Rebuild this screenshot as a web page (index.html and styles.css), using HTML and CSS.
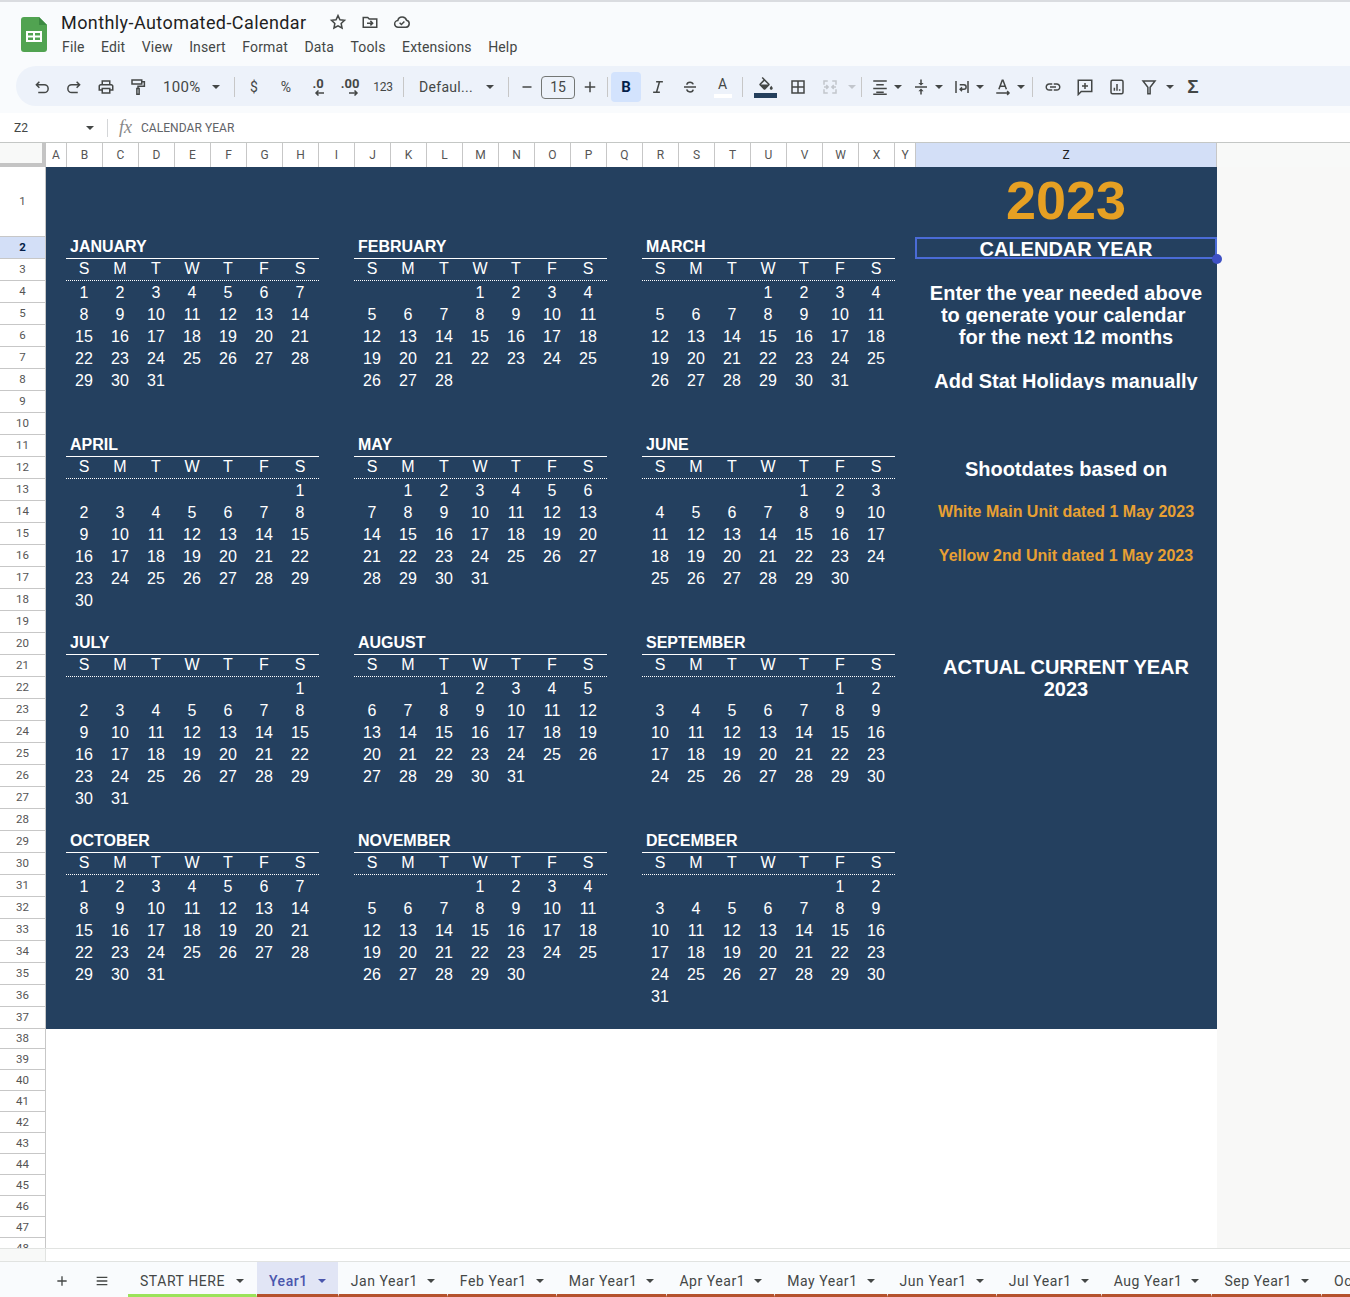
FILE: index.html
```html
<!DOCTYPE html>
<html lang="en">
  <head>
    <meta charset="UTF-8" />
    <title>Monthly-Automated-Calendar</title>
    <link rel="stylesheet" href="styles.css">
  </head>
  <body>
    <header class="topbar">
      <svg class="logo" viewBox="0 0 26 35" width="26" height="35">
        <path d="M3 0h15l8 8v24a3 3 0 0 1-3 3H3a3 3 0 0 1-3-3V3a3 3 0 0 1 3-3z" fill="#51a351" />
        <path d="M18 0l8 8h-8z" fill="#3c8a42" />
        <path d="M5 14h16v11H5z" fill="#fff" />
        <path d="M7 16h5v2.500H7zM14 16h5v2.500h-5zM7 20.500h5V23H7zM14 20.500h5V23h-5z" fill="#51a351" />
      </svg>
      <div class="doc-info">
        <div class="title-row">
          <span class="doc-title">Monthly-Automated-Calendar</span>
          <svg class="title-icon star-icon" viewBox="0 0 24 24"><path d="M12 3.500l2.600 5.600 6.100.7-4.500 4.200 1.200 6-5.400-3-5.400 3 1.200-6-4.500-4.200 6.100-.7z" /></svg>
          <svg class="title-icon" viewBox="0 0 24 24"><path d="M3 6h6l2 2h10v11H3z" /><path d="M8 13.500h7M12.500 10.500l3 3-3 3" /></svg>
          <svg class="title-icon" viewBox="0 0 24 24"><path d="M7 19a4.500 4.500 0 0 1-.6-9A6 6 0 0 1 18 9.600 4.800 4.800 0 0 1 17.500 19z" /><path d="M8.800 13l2.400 2.400 4-4" /></svg>
        </div>
        <nav class="menu">
          <span>File</span><span>Edit</span><span>View</span><span>Insert</span><span>Format</span><span>Data</span><span>Tools</span><span>Extensions</span><span>Help</span>
        </nav>
      </div>
    </header>

    <div class="toolbar-wrap">
      <div class="toolbar">
        <span class="btn"><svg class="icon" viewBox="0 0 24 24"><path d="M8.500 5L4.500 9l4 4M4.500 9H15a5.200 5.200 0 0 1 0 10.400H7" /></svg></span>
        <span class="btn"><svg class="icon" viewBox="0 0 24 24"><path d="M15.500 5l4 4-4 4M19.500 9H9a5.200 5.200 0 0 0 0 10.400h8" /></svg></span>
        <span class="btn"><svg class="icon icon-fill" viewBox="0 0 24 24"><path d="M19 8h-1V3H6v5H5c-1.660 0-3 1.340-3 3v6h4v4h12v-4h4v-6c0-1.660-1.340-3-3-3zM8 5h8v3H8V5zm8 12v2H8v-4h8v2zm2-2v-2H6v2H4v-4c0-.55.45-1 1-1h14c.55 0 1 .45 1 1v4h-2z" /></svg></span>
        <span class="btn"><svg class="icon" viewBox="0 0 24 24"><path d="M4 2.500h13v5.500H4zM17 5h3.500v6H12v3M10.500 14h3v7.500h-3z" /></svg></span>
        <span class="select zoom-select">100%<i class="caret"></i></span>
        <span class="sep"></span>
        <span class="btn glyph-small">$</span>
        <span class="btn glyph-small">%</span>
        <span class="btn"><span class="dec">.0<svg viewBox="0 0 10 6" width="10" height="6"><path d="M10 3H2M4.500 .5L2 3l2.500 2.500" /></svg></span></span>
        <span class="btn"><span class="dec">.00<svg viewBox="0 0 10 6" width="10" height="6"><path d="M0 3h8M5.500 .5L8 3 5.500 5.500" /></svg></span></span>
        <span class="btn btn-123">123</span>
        <span class="sep"></span>
        <span class="select font-select">Defaul...<i class="caret"></i></span>
        <span class="sep"></span>
        <span class="btn btn-narrow"><svg class="icon" viewBox="0 0 24 24"><path d="M6 12h12" /></svg></span>
        <span class="size-box">15</span>
        <span class="btn btn-narrow"><svg class="icon" viewBox="0 0 24 24"><path d="M5 12h14M12 5v14" /></svg></span>
        <span class="sep"></span>
        <span class="btn btn-bold">B</span>
        <span class="btn"><svg class="icon" viewBox="0 0 24 24"><path d="M9.500 5h9M5.500 19h9M14 5l-4 14" /></svg></span>
        <span class="btn"><svg class="icon" viewBox="0 0 24 24"><path d="M4 12h16M7.800 9c.2-2.200 2-3.500 4.200-3.500 2.100 0 3.700 1 4.200 3M16.200 15.500c-.2 2-2 3-4.200 3-2.300 0-4-1.200-4.300-3.200" /></svg></span>
        <span class="btn btn-text-color"><span class="color-a">A<i class="color-bar"></i></span></span>
        <span class="sep"></span>
        <span class="btn btn-fill">
          <span class="fill-stack">
            <svg class="icon icon-fill" viewBox="0 0 24 20"><path d="M16.560 8.940L7.620 0 6.210 1.410l2.380 2.380-5.150 5.150c-.59.59-.59 1.540 0 2.120l5.500 5.500c.29.29.68.44 1.060.44s.77-.15 1.060-.44l5.500-5.500c.59-.58.59-1.530 0-2.120zM5.210 10L10 5.210 14.790 10H5.210zM19 11.500s-2 2.170-2 3.500c0 1.100.9 2 2 2s2-.9 2-2c0-1.330-2-3.500-2-3.500z" /></svg>
            <i class="fill-bar"></i>
          </span>
        </span>
        <span class="btn"><svg class="icon" viewBox="0 0 24 24"><path d="M4 4h16v16H4zM12 4v16M4 12h16" /></svg></span>
        <span class="btn btn-off"><svg class="icon" viewBox="0 0 24 24"><path d="M4 9V4h5M4 15v5h5M20 9V4h-5M20 15v5h-5M10 12H4M7 9.500L9.500 12 7 14.500M14 12h6M17 9.500L14.500 12l2.500 2.500" /></svg></span>
        <i class="caret caret-off"></i>
        <span class="sep"></span>
        <span class="split split-first"><svg class="icon" viewBox="0 0 24 24"><path d="M3 4h18M7 9h10M3 14h18M7 19h10M3 21.500h18" /></svg><i class="caret"></i></span>
        <span class="split"><svg class="icon" viewBox="0 0 24 24"><path d="M4 12h16" /><path class="solid" d="M12 10L8.500 6.500H11V2h2v4.500h2.500zM12 14l3.500 3.500H13V22h-2v-4.500H8.500z" /></svg><i class="caret"></i></span>
        <span class="split"><svg class="icon" viewBox="0 0 24 24"><path d="M4 4v16M20 4v16M9 9h5.500a3 3 0 0 1 0 6H10M12 12.500L9.500 15l2.500 2.500" /></svg><i class="caret"></i></span>
        <span class="split"><svg class="icon" viewBox="0 0 24 24"><path d="M6.500 15L11 3h1l4.500 12M8 11h7M3 20h17M17.500 17.500L20 20l-2.500 2.500" /></svg><i class="caret"></i></span>
        <span class="sep sep-last"></span>
        <span class="btn"><svg class="icon icon-fill" viewBox="0 0 24 24"><path d="M3.900 12c0-1.710 1.390-3.100 3.100-3.100h4V7H7c-2.760 0-5 2.240-5 5s2.240 5 5 5h4v-1.900H7c-1.710 0-3.100-1.390-3.100-3.100zM8 13h8v-2H8v2zm9-6h-4v1.900h4c1.710 0 3.100 1.390 3.100 3.100s-1.390 3.100-3.100 3.100h-4V17h4c2.760 0 5-2.240 5-5s-2.240-5-5-5z" /></svg></span>
        <span class="btn"><svg class="icon" viewBox="0 0 24 24"><path d="M3 3h18v15H7l-4 4zM12 6.500v8M8 10.500h8" /></svg></span>
        <span class="btn"><svg class="icon" viewBox="0 0 24 24"><rect x="4" y="3" width="16" height="18" rx="2" /><path d="M8.500 17v-4M12 17V8M15.500 17v-2" /></svg></span>
        <span class="split split-filter"><svg class="icon icon-wide" viewBox="0 0 24 24"><path d="M4 4h16l-6.500 8.500V21h-3v-8.500z" /></svg><i class="caret"></i></span>
        <span class="btn btn-sigma">Σ</span>
      </div>
    </div>

    <div class="formula-bar">
      <span class="name-box">Z2<i class="caret"></i></span>
      <span class="formula-sep"></span>
      <span class="fx">fx</span>
      <span class="formula-text">CALENDAR YEAR</span>
    </div>

    <div class="col-heads" id="colHeads"><div class="corner"></div></div>

    <main class="sheet">
      <div class="row-heads" id="rowHeads"></div>
      <div class="cells">
        <div class="panel">
          <div class="months" id="months"></div>
          <div class="z-col">
            <div class="z-cell r1 year-big">2023</div>
            <div class="z-cell r2 z-title selected">CALENDAR YEAR<i class="handle"></i></div>
            <div class="z-cell r4 z-note clip">Enter the year needed above</div>
            <div class="z-cell r5 z-note clip">to generate your calendar </div>
            <div class="z-cell r6 z-note clip">for the next 12 months</div>
            <div class="z-cell r8 z-note clip">Add Stat Holidays manually</div>
            <div class="z-cell r12 z-note">Shootdates based on</div>
            <div class="z-cell r14 z-orange">White Main Unit dated 1 May 2023</div>
            <div class="z-cell r16 z-orange">Yellow 2nd Unit dated 1 May 2023</div>
            <div class="z-cell r21 z-note">ACTUAL CURRENT YEAR</div>
            <div class="z-cell r22 z-note">2023</div>
          </div>
        </div>
      </div>
      <div class="gutter"></div>
    </main>

    <div class="scroll-strip"><div class="scroll-left"></div></div>

    <footer class="tabbar">
      <span class="tab-tool"><svg class="icon" viewBox="0 0 24 24"><path d="M5 12h14M12 5v14" /></svg></span>
      <span class="tab-tool"><svg class="icon" viewBox="0 0 24 24"><path d="M4 6.500h16M4 12h16M4 17.500h16" /></svg></span>
      <div class="tabs">
        <span class="tab tab-green">START HERE<i class="caret"></i></span>
        <span class="tab tab-active">Year1<i class="caret"></i></span>
        <span class="tab">Jan Year1<i class="caret"></i></span>
        <span class="tab">Feb Year1<i class="caret"></i></span>
        <span class="tab">Mar Year1<i class="caret"></i></span>
        <span class="tab">Apr Year1<i class="caret"></i></span>
        <span class="tab">May Year1<i class="caret"></i></span>
        <span class="tab">Jun Year1<i class="caret"></i></span>
        <span class="tab">Jul Year1<i class="caret"></i></span>
        <span class="tab">Aug Year1<i class="caret"></i></span>
        <span class="tab">Sep Year1<i class="caret"></i></span>
        <span class="tab">Oct Year1<i class="caret"></i></span>
      </div>
    </footer>

    <script src="script.js"></script>
  </body>
</html>
```

FILE: styles.css
```css
* {
  box-sizing: border-box;
}
html,
body {
  margin: 0;
  height: 1297px;
  overflow: hidden;
}
body {
  font-family: Roboto, "Liberation Sans", sans-serif;
  color: #444746;
  background: #fff;
  display: flex;
  flex-direction: column;
}
i {
  font-style: normal;
}
.caret {
  display: inline-block;
  width: 0;
  height: 0;
  border-left: 4px solid transparent;
  border-right: 4px solid transparent;
  border-top: 4px solid #444746;
}

/* title and menus */
.topbar {
  height: 66px;
  flex: none;
  display: flex;
  background: #f9fbfd;
  border-top: 2px solid #dadce0;
  padding: 15px 0 0 21px;
}
.logo {
  flex: none;
}
.doc-info {
  margin: -7px 0 0 14px;
}
.title-row {
  display: flex;
  align-items: center;
  height: 24px;
}
.doc-title {
  font-size: 18px;
  letter-spacing: 0.42px;
  color: #1f1f1f;
  width: 268px;
}
.title-icon {
  width: 18px;
  height: 18px;
  margin-right: 14px;
  fill: none;
  stroke: #444746;
  stroke-width: 2;
}
.menu {
  display: flex;
  gap: 16.5px;
  font-size: 14px;
  letter-spacing: 0.14px;
  margin-top: 5px;
  padding-left: 1px;
}

/* toolbar */
.toolbar-wrap {
  height: 47px;
  flex: none;
  background: #f9fbfd;
}
.toolbar {
  height: 40px;
  margin-left: 16px;
  padding: 2px 0 0 10px;
  background: #edf2fa;
  border-radius: 20px 0 0 20px;
  display: flex;
  align-items: center;
}
.icon {
  width: 18px;
  height: 18px;
  fill: none;
  stroke: #444746;
  stroke-width: 2;
  flex: none;
}
.icon-fill {
  fill: #444746;
  stroke: none;
}
.icon .solid {
  fill: #444746;
  stroke: none;
}
.btn {
  width: 32px;
  height: 30px;
  flex: none;
  display: flex;
  align-items: center;
  justify-content: center;
  font-size: 13px;
}
.btn-narrow {
  width: 29px;
}
.glyph-small {
  font-size: 14px;
  color: #444746;
}
.btn-123 {
  width: 34px;
  font-size: 12px;
  letter-spacing: -0.2px;
}
.sep {
  width: 1px;
  height: 20px;
  margin: 0 3px;
  background: #c7c7c7;
  flex: none;
}
.sep-last {
  margin: 0 4px;
}
.select {
  display: flex;
  align-items: center;
  justify-content: space-between;
  font-size: 14px;
  flex: none;
  letter-spacing: 0.3px;
}
.zoom-select {
  width: 77px;
  padding: 0 11px 0 9px;
  font-size: 15px;
}
.font-select {
  width: 98px;
  padding: 0 11px 0 12px;
}
.dec {
  display: flex;
  flex-direction: column;
  align-items: flex-end;
  font-size: 13px;
  font-weight: 700;
  line-height: 11px;
}
.dec svg {
  fill: none;
  stroke: #444746;
  stroke-width: 1.5;
  margin-top: 1px;
}
.size-box {
  width: 34px;
  height: 23px;
  flex: none;
  border: 1px solid #747775;
  border-radius: 4px;
  font-size: 14px;
  line-height: 21px;
  text-align: center;
}
.btn-bold {
  width: 30px;
  margin-right: 1px;
  background: #d3e3fd;
  border-radius: 4px;
  color: #041e49;
  font-weight: 700;
  font-size: 15px;
}
.color-a {
  display: flex;
  flex-direction: column;
  align-items: center;
  font-size: 14px;
  line-height: 15px;
}
.color-bar {
  width: 18px;
  height: 4px;
  background: #fff;
  margin-top: 2px;
}
.btn-text-color {
  width: 33px;
}
.btn-fill {
  width: 33px;
  margin-left: 3px;
}
.fill-stack {
  display: flex;
  flex-direction: column;
  align-items: center;
}
.fill-stack .icon {
  height: 15px;
}
.fill-bar {
  width: 23px;
  height: 5px;
  margin-top: 1px;
  background: #243f5c;
}
.btn-off .icon {
  stroke: #c2c6cc;
}
.caret-off {
  border-top-color: #c2c6cc;
  margin: 0 2px;
  flex: none;
}
.split {
  display: flex;
  align-items: center;
  margin-left: 5px;
  flex: none;
}
.split-first {
  margin-left: 4px;
}
.split .icon {
  margin: 0 2px;
}
.split .caret {
  margin: 0 3px;
}
.split-filter {
  margin-left: 2px;
}
.split .icon-wide {
  margin: 0 5px;
}
.btn-sigma {
  font-size: 19px;
  font-family: "Liberation Sans", sans-serif;
  font-weight: 700;
}

/* name box and formula */
.formula-bar {
  height: 30px;
  flex: none;
  display: flex;
  align-items: center;
  background: #fff;
  border-bottom: 1px solid #c4c7c5;
  padding-left: 14px;
  font-size: 12px;
}
.name-box {
  width: 80px;
  display: flex;
  align-items: center;
  justify-content: space-between;
}
.formula-sep {
  width: 1px;
  height: 18px;
  margin-left: 13px;
  background: #d4d6d8;
}
.fx {
  font-family: "Liberation Serif", serif;
  font-style: italic;
  font-size: 18px;
  color: #888;
  margin-left: 11px;
  width: 22px;
}
.formula-text {
  color: #5f6368;
  letter-spacing: 0.05px;
}

/* column and row headers */
.col-heads {
  height: 24px;
  flex: none;
  display: flex;
  background: #f8f9f8;
  font-size: 12px;
}
.corner {
  width: 46px;
  flex: none;
  border-right: 4px solid #c4c4c4;
  border-bottom: 4px solid #c4c4c4;
}
.col-head {
  flex: none;
  background: #fff;
  border-right: 1px solid #c7c7c7;
  padding-bottom: 1px;
  display: flex;
  align-items: center;
  justify-content: center;
  color: #555;
  width: 36px;
}
.col-small {
  width: 21px;
}
.col-z {
  width: 301px;
  background: #d3dff7;
  color: #1f1f1f;
}
.sheet {
  flex: 1;
  display: flex;
  overflow: hidden;
  min-height: 0;
}
.row-heads {
  width: 46px;
  flex: none;
  border-right: 1px solid #c7c7c7;
  font-size: 11.5px;
  color: #555;
}
.row-head {
  height: 22px;
  padding-bottom: 2px;
  display: flex;
  align-items: center;
  justify-content: center;
  border-bottom: 1px solid #c7c7c7;
}
.row-tall {
  height: 70px;
}
.row-low {
  height: 21px;
  padding-bottom: 0;
}
.row-first-low {
  height: 20px;
  padding-bottom: 2px;
}
.row-on {
  background: #d3dff7;
  color: #041e49;
  font-weight: 700;
}
.cells {
  width: 1171px;
  flex: none;
}
.gutter {
  flex: 1;
  background: #f8f8f7;
}

/* calendar area */
.panel {
  height: 862px;
  background: #24405f;
  display: flex;
  color: #fff;
  font-family: "Liberation Sans", Arial, sans-serif;
}
.months {
  display: grid;
  grid-template-columns: repeat(3, 253px);
  grid-auto-rows: 198px;
  column-gap: 35px;
  padding: 70px 0 0 20px;
  width: 849px;
  flex: none;
}
.month-name {
  height: 22px;
  font-size: 16px;
  font-weight: 700;
  line-height: 20px;
  padding-left: 4px;
  border-bottom: 1px solid #fff;
}
.month-days {
  display: grid;
  grid-template-columns: repeat(7, 36px);
  grid-auto-rows: 22px;
  padding-top: 1px;
  font-size: 16px;
  line-height: 22px;
  text-align: center;
}
.weekday-row {
  border-bottom: 1px dotted #fff;
  display: grid;
  grid-template-columns: repeat(7, 36px);
  height: 22px;
  font-size: 16px;
  line-height: 20px;
  text-align: center;
}
.z-col {
  width: 302px;
  margin-left: 20px;
  flex: none;
  display: grid;
  grid-template-rows: 70px repeat(36, 22px);
  text-align: center;
}
.z-cell {
  line-height: 22px;
  white-space: pre;
}
.r1 { grid-row: 1; }
.r2 { grid-row: 2; }
.r4 { grid-row: 4; }
.r5 { grid-row: 5; }
.r6 { grid-row: 6; }
.r8 { grid-row: 8; }
.r12 { grid-row: 12; }
.r14 { grid-row: 14; }
.r16 { grid-row: 16; }
.r21 { grid-row: 21; }
.r22 { grid-row: 22; }
.year-big {
  font-size: 54px;
  font-weight: 700;
  line-height: 66px;
  color: #e6a023;
}
.z-title {
  font-size: 20px;
  font-weight: 700;
  line-height: 24px;
}
.selected {
  position: relative;
  box-shadow: inset 0 0 0 2px #4a6bd6;
}
.handle {
  position: absolute;
  right: -5px;
  bottom: -5px;
  width: 10px;
  height: 10px;
  border-radius: 50%;
  background: #3f51c4;
}
.z-note {
  font-size: 20px;
  font-weight: 700;
  line-height: 24px;
}
.clip {
  height: 21px;
  overflow: hidden;
}
.z-orange {
  font-size: 16px;
  font-weight: 700;
  color: #e8a033;
}

/* bottom */
.scroll-strip {
  height: 13px;
  flex: none;
  border-top: 1px solid #e1e3e1;
  background: #fff;
}
.scroll-left {
  width: 46px;
  height: 100%;
  background: #f8f9f8;
  border-right: 1px solid #e1e3e1;
}
.tabbar {
  height: 36px;
  flex: none;
  display: flex;
  background: #f9fbfd;
  border-top: 1px solid #e1e3e1;
  overflow: hidden;
}
.tab-tool {
  width: 40px;
  flex: none;
  display: flex;
  align-items: center;
  justify-content: center;
  padding-top: 2px;
}
.tab-tool:first-child {
  margin-left: 42px;
}
.tab-tool .icon {
  width: 16px;
  height: 16px;
  stroke-width: 2;
}
.tabs {
  display: flex;
  margin-left: 6px;
  flex: none;
}
.tab {
  display: flex;
  align-items: center;
  flex: none;
  padding: 5px 12px 0;
  font-size: 14px;
  letter-spacing: 0.55px;
  border-bottom: 3px solid #b5522d;
  border-right: 1px solid #f9fbfd;
}
.tab .caret {
  margin-left: 9px;
}
.tab-green {
  border-bottom-color: #9be35a;
}
.tab-green .caret {
  margin-left: 11px;
}
.tab-active {
  background: #e1e5f5;
  color: #4a56ad;
  font-weight: 500;
}
.tab-active .caret {
  border-top-color: #4a56ad;
  margin-left: 10px;
}
```

FILE: script.js
```js
const monthNames = ["JANUARY", "FEBRUARY", "MARCH", "APRIL", "MAY", "JUNE", "JULY", "AUGUST", "SEPTEMBER", "OCTOBER", "NOVEMBER", "DECEMBER"];
const firstDay = [0, 3, 3, 6, 1, 4, 6, 2, 5, 0, 3, 5];
const monthLength = [31, 28, 31, 30, 31, 30, 31, 31, 30, 31, 30, 31];

// column letters
const colHeads = document.getElementById("colHeads");
"ABCDEFGHIJKLMNOPQRSTUVWXYZ".split("").forEach((letter) => {
  const col = document.createElement("div");
  col.className = "col-head";
  if (letter === "A" || letter === "Y") col.classList.add("col-small");
  if (letter === "Z") col.classList.add("col-z");
  col.textContent = letter;
  colHeads.appendChild(col);
});

// row numbers
const rowHeads = document.getElementById("rowHeads");
for (let i = 1; i <= 48; i++) {
  const row = document.createElement("div");
  row.className = "row-head";
  if (i === 1) row.classList.add("row-tall");
  if (i === 2) row.classList.add("row-on");
  if (i > 37) row.classList.add("row-low");
  if (i === 38) row.classList.add("row-first-low");
  row.textContent = i;
  rowHeads.appendChild(row);
}

// the twelve months
const months = document.getElementById("months");
monthNames.forEach((name, m) => {
  let html = '<div class="month-name">' + name + "</div>";
  html += '<div class="weekday-row">';
  "SMTWTFS".split("").forEach((d) => {
    html += "<span>" + d + "</span>";
  });
  html += '</div><div class="month-days">';
  for (let i = 0; i < firstDay[m]; i++) html += "<span></span>";
  for (let d = 1; d <= monthLength[m]; d++) html += "<span>" + d + "</span>";
  html += "</div>";

  const box = document.createElement("section");
  box.innerHTML = html;
  months.appendChild(box);
});
```
